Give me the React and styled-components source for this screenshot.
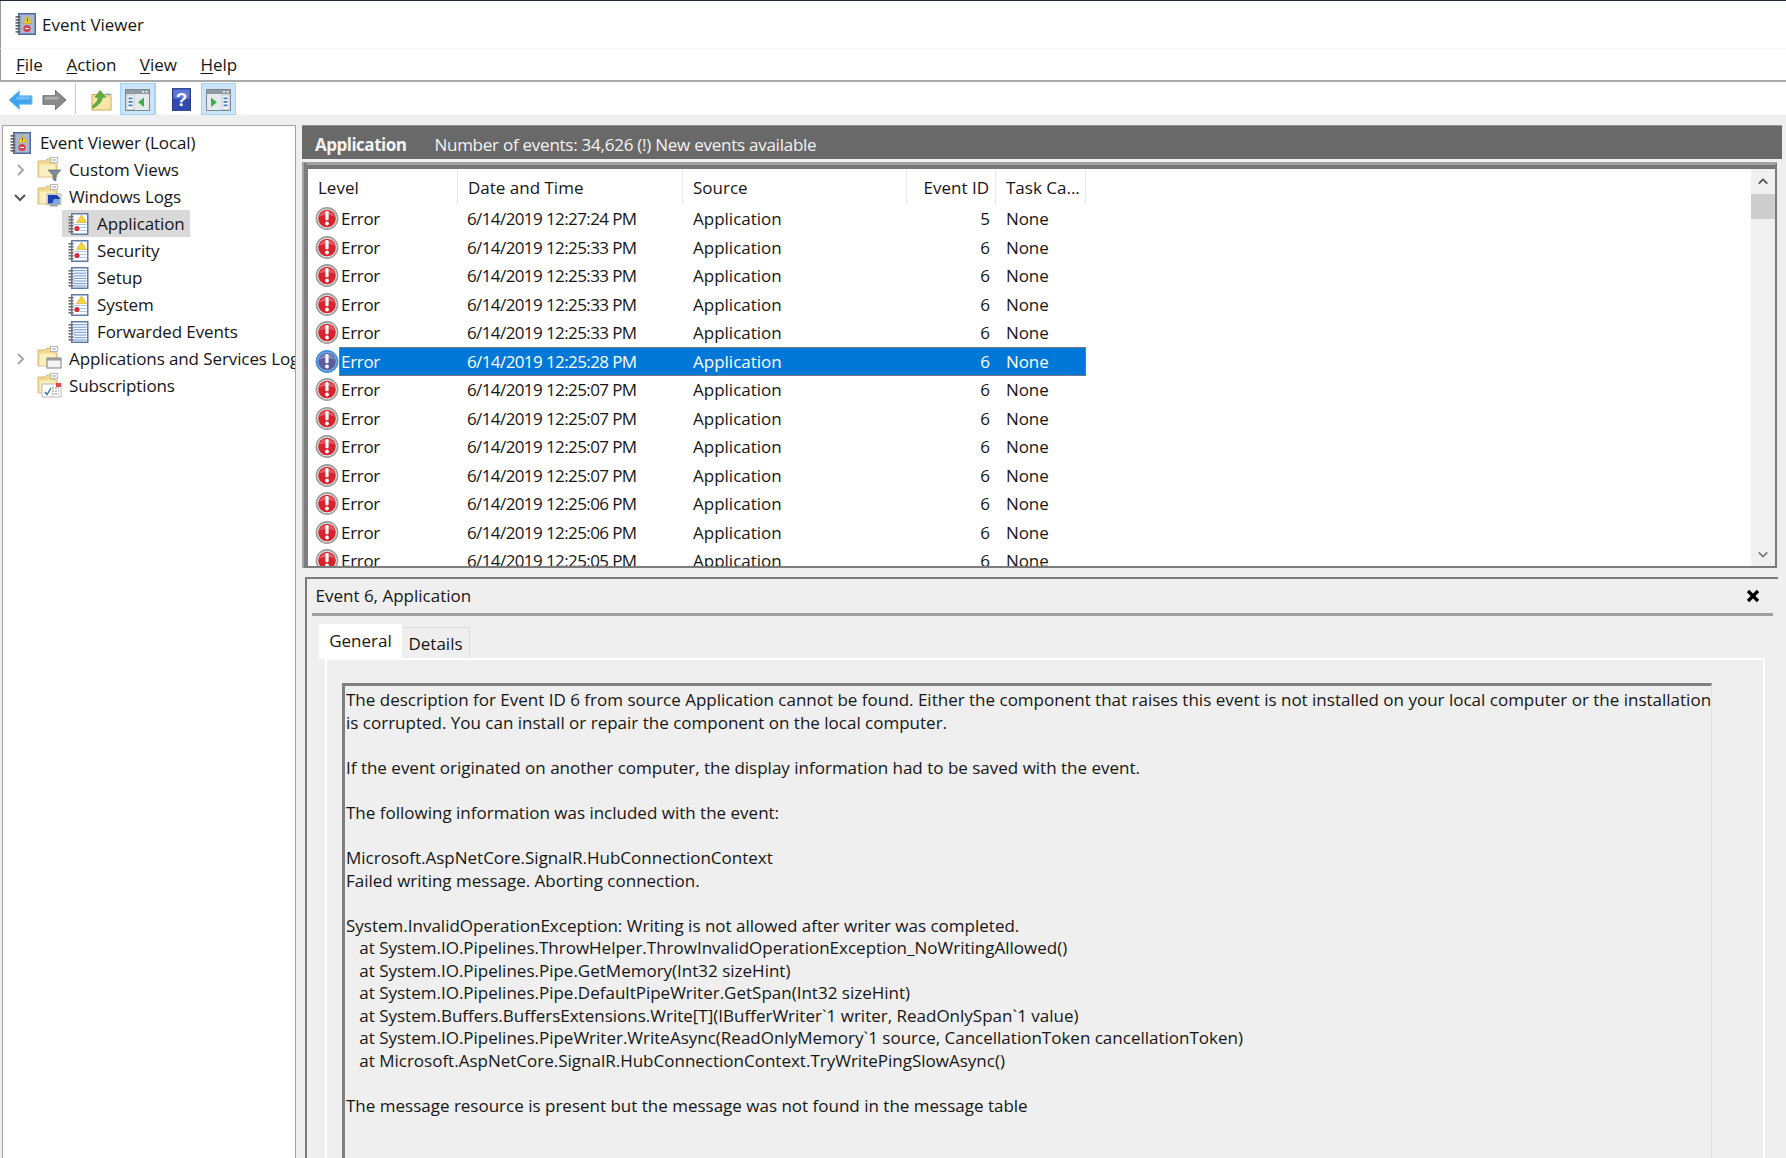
import React from "react";
import styled, { createGlobalStyle } from "styled-components";

const GlobalStyle = createGlobalStyle`
  html, body { margin: 0; padding: 0; background: #efefef; }
  body { font-family: "Open Sans", "Noto Sans", "Liberation Sans", sans-serif; color: #161616; overflow: hidden; }
  * { box-sizing: border-box; }
`;

const Window = styled.div`
  width: 1786px;
  height: 1158px;
  display: flex;
  flex-direction: column;
  overflow: hidden;
  font-size: 17px;
  background: #efefef;
  border-top: 1px solid #1f2d3a;
`;

const TitleBar = styled.div`
  height: 47px;
  flex: none;
  display: flex;
  align-items: center;
  gap: 4px;
  padding: 0 0 1px 13px;
  background: #fff;
  border-left: 1px solid #9a9a9a;
`;

const MenuBar = styled.div`
  height: 34px;
  flex: none;
  display: flex;
  align-items: center;
  padding-left: 15px;
  gap: 23.5px;
  background: #fff;
  border-top: 1px solid #f4f4f4;
  border-left: 1px solid #9a9a9a;
  border-bottom: 2px solid #a9a9a9;
  u { text-underline-offset: 2px; text-decoration-thickness: 1px; }
`;

const Toolbar = styled.div`
  height: 33px;
  flex: none;
  display: flex;
  align-items: center;
  padding-left: 7px;
  background: #fff;
`;

const ToolButton = styled.div`
  height: 32px;
  width: ${(p) => p.$w || 35}px;
  margin-left: ${(p) => p.$ml || 0}px;
  margin-top: 1px;
  padding-top: 1px;
  display: flex;
  align-items: center;
  justify-content: center;
  background: ${(p) => (p.$active ? "#cce4f7" : "transparent")};
  border: 1px solid ${(p) => (p.$active ? "#a6d2f6" : "transparent")};
`;

const ToolSep = styled.div`
  width: 1px;
  height: 31px;
  margin-left: ${(p) => p.$ml || 0}px;
  background: #c9c9c9;
`;

const Workspace = styled.div`
  flex: 1;
  min-height: 0;
  display: grid;
  grid-template-columns: 294px 1fr;
  gap: 6px;
  padding: 10px 4px 0 2px;
`;

const TreePane = styled.div`
  background: #fff;
  border: 1px solid #a3a3a3;
  border-width: 1px 1px 0 1px;
  padding-top: 3px;
  overflow: hidden;
  white-space: nowrap;
  letter-spacing: -0.1px;
`;

const TreeRow = styled.div`
  height: 27px;
  display: flex;
  align-items: center;
  padding-left: ${(p) => p.$pad}px;
`;

const Chevron = styled.span`
  width: 21px;
  flex: none;
  display: flex;
  justify-content: center;
`;

const TreeIcon = styled.span`
  width: ${(p) => p.$w || 31}px;
  padding-left: ${(p) => p.$pad || 0}px;
  flex: none;
  display: flex;
`;

const LeafItem = styled.div`
  height: 27px;
  display: flex;
  align-items: center;
  padding: 0 5px;
  background: ${(p) => (p.$current ? "#d9d9d9" : "transparent")};
`;

const RightColumn = styled.div`
  display: flex;
  flex-direction: column;
  min-width: 0;
`;

const HeaderBar = styled.div`
  height: 34px;
  flex: none;
  display: flex;
  align-items: center;
  gap: 28px;
  padding: 3px 0 0 13px;
  background: #696969;
  color: #f3f3f3;
  border-top: 1px solid #8f8f8f;
  b { font-weight: 700; letter-spacing: -0.5px; }
  span { letter-spacing: -0.25px; }
`;

const ListFrame = styled.div`
  height: 406px;
  flex: none;
  margin: 3px 5px 0 2px;
  padding-top: 4px;
  display: flex;
  background: #fff;
  border: 2px solid #7c7c7c;
  border-left-width: 4px;
  border-top: 3px solid #a2a2a2;
  box-shadow: inset 0 4px 0 #757575, -2px 0 0 #a2a2a2;
  overflow: hidden;
`;

const ListBody = styled.div`
  flex: 1;
  min-width: 0;
  overflow: hidden;
`;

const HeadRow = styled.div`
  height: 35.5px;
  display: flex;
`;

const HeadCell = styled.div`
  width: ${(p) => p.$w}px;
  flex: none;
  display: flex;
  align-items: center;
  padding: 2px 6px 0 10px;
  white-space: nowrap;
  justify-content: ${(p) => (p.$right ? "flex-end" : "flex-start")};
  border-right: 1px solid #e8e8e8;
`;

const EventRow = styled.div`
  height: 28.5px;
  display: flex;
  align-items: center;
  width: 778px;
`;

const LevelIcon = styled.span`
  width: 31px;
  flex: none;
  display: flex;
  padding-left: 7px;
`;

const RowCells = styled.div`
  flex: 1;
  height: 100%;
  display: flex;
  align-items: center;
  background: ${(p) => (p.$selected ? "#0078d7" : "transparent")};
  color: ${(p) => (p.$selected ? "#fff" : "inherit")};
  outline: ${(p) => (p.$selected ? "1px solid #6f7a84" : "none")};
  outline-offset: -1px;
`;

const Cell = styled.span`
  width: ${(p) => p.$w}px;
  flex: none;
  padding-left: ${(p) => p.$pad || 0}px;
  text-align: ${(p) => (p.$right ? "right" : "left")};
  letter-spacing: ${(p) => p.$ls || 0}px;
`;

const ScrollTrack = styled.div`
  width: 24px;
  flex: none;
  background: #f0f0f0;
  display: flex;
  flex-direction: column;
  align-items: center;
`;

const ScrollButton = styled.div`
  height: 25px;
  flex: none;
  width: 100%;
  display: flex;
  align-items: center;
  justify-content: center;
`;

const ScrollThumb = styled.div`
  height: 25px;
  width: 100%;
  flex: none;
  background: #cdcdcd;
`;

const ScrollGap = styled.div`
  flex: 1;
`;

const DetailsPane = styled.div`
  flex: 1;
  min-height: 0;
  margin: 9px 4px 0 3px;
  padding: 0 5px 0 5px;
  border-top: 2px solid #7c7c7c;
  border-left: 2px solid #7c7c7c;
  display: flex;
  flex-direction: column;
  overflow: hidden;
`;

const DetailsTitle = styled.div`
  height: 37px;
  flex: none;
  display: flex;
  align-items: center;
  justify-content: space-between;
  padding: 0 13px 1px 3.5px;
  border-bottom: 3px solid #a0a0a0;
`;

const TabStrip = styled.div`
  height: 35px;
  margin-top: 7px;
  flex: none;
  display: flex;
  align-items: flex-end;
  padding-left: 7px;
`;

const Tab = styled.div`
  height: ${(p) => (p.$active ? 35 : 31)}px;
  width: ${(p) => p.$w}px;
  margin-bottom: ${(p) => (p.$active ? -1 : 0)}px;
  display: flex;
  align-items: center;
  justify-content: center;
  padding-bottom: ${(p) => (p.$active ? 3 : 0)}px;
  background: ${(p) => (p.$active ? "#fff" : "transparent")};
  border: 1px solid ${(p) => (p.$active ? "#fff" : "#dcdcdc")};
  border-left-width: ${(p) => (p.$active ? 1 : 0)}px;
  border-bottom: 0;
  position: relative;
`;

const TabPanel = styled.div`
  flex: 1;
  min-height: 0;
  margin: 0 8px 0 13px;
  padding: 23px 51px 0 15px;
  border-top: 2px solid #fff;
  border-left: 2px solid #fff;
  border-right: 2px solid #fff;
`;

const DescriptionBox = styled.div`
  height: 100%;
  padding: 3px 0 0 1px;
  border-top: 3px solid #808080;
  border-left: 3px solid #808080;
  border-right: 1px solid #e2e2e2;
  white-space: pre;
  line-height: 22.56px;
`;

// the root node and the title bar use the filled book, the logs the open page
function BookIcon({ size = 24 }) {
  return (
    <svg width={size} height={size} viewBox="0 0 24 24">
      <rect x="4" y="1" width="18" height="22" fill="#4f6a9c" />
      <rect x="5.5" y="2.5" width="15" height="19" fill="#a9b8d3" />
      {[4, 7, 10, 13, 16, 19].map((y) => (
        <rect key={y} x="1.5" y={y} width="5" height="1.7" fill="#666" />
      ))}
      <path d="M13.5 3.5 L18 11.5 L9 11.5 Z" fill="#f3cf2e" stroke="#b9951a" strokeWidth="0.5" />
      <rect x="13" y="6.5" width="1" height="3" fill="#5a4a10" />
      <circle cx="13" cy="16.5" r="3.6" fill="#d6404f" />
      <rect x="11" y="16" width="4" height="1" fill="#fff" />
    </svg>
  );
}

function NotebookIcon({ warn = true }) {
  return (
    <svg width="24" height="24" viewBox="0 0 24 24">
      <rect x="4" y="1" width="17.5" height="22" fill="#5f79a8" />
      <rect x="5.5" y="2.5" width="14.5" height="19" fill="#fff" />
      {[4, 7, 10, 13, 16, 19].map((y) => (
        <rect key={y} x="1.5" y={y} width="5" height="1.6" fill="#707070" />
      ))}
      {warn ? (
        <>
          <path d="M14.5 3 L19.5 10.5 L9.5 10.5 Z" fill="#f5d63c" stroke="#c69c16" strokeWidth="0.5" />
          <rect x="7" y="12" width="12.5" height="1" fill="#a9c6e4" />
          <rect x="13" y="15" width="6.5" height="1" fill="#a9c6e4" />
          <rect x="13" y="18" width="6.5" height="1" fill="#a9c6e4" />
          <circle cx="10" cy="16.5" r="2.6" fill="#d9293a" />
        </>
      ) : (
        [4, 6.6, 9.2, 11.8, 14.4, 17, 19.4].map((y) => (
          <rect key={y} x="7" y={y} width="12.5" height="1.2" fill="#7ba6d6" />
        ))
      )}
    </svg>
  );
}

function FolderBase() {
  return (
    <>
      <path d="M1 4 H8 L10 2 H17 L17 7 H20 V20 H1 Z" fill="#f3d98c" stroke="#c9ae68" strokeWidth="0.8" />
      <rect x="2.5" y="7.5" width="16" height="12" fill="#fbeebf" />
      <rect x="13.5" y="0.5" width="7" height="5" fill="#fff" stroke="#a8a8a8" strokeWidth="0.8" />
      <rect x="15" y="2.5" width="4" height="1" fill="#8a9cb5" />
    </>
  );
}

function FolderFilterIcon() {
  return (
    <svg width="25" height="25" viewBox="0 0 25 25">
      <FolderBase />
      <path d="M11 13 H24 L19 18.5 V24 L16 22.5 V18.5 Z" fill="#7d8c99" stroke="#56636e" strokeWidth="0.6" />
    </svg>
  );
}

function FolderMonitorIcon() {
  return (
    <svg width="25" height="25" viewBox="0 0 25 25">
      <FolderBase />
      <rect x="10" y="10" width="14" height="10.5" fill="#e6e6e6" stroke="#8e8e8e" strokeWidth="0.6" />
      <path d="M11 11 H20 L23 14 V19.5 H11 Z" fill="#1c3fb0" />
      <path d="M17 15 H23 V19.5 H15 Z" fill="#7da8e8" />
      <rect x="13" y="21" width="8" height="1.5" fill="#a0a0a0" />
    </svg>
  );
}

function FolderWindowIcon() {
  return (
    <svg width="25" height="25" viewBox="0 0 25 25">
      <FolderBase />
      <rect x="10" y="12" width="14" height="10" fill="#f4f4f4" stroke="#7f7f7f" strokeWidth="1" />
      <rect x="10" y="12" width="14" height="2.5" fill="#9a9a9a" />
    </svg>
  );
}

function FolderCalendarIcon() {
  return (
    <svg width="25" height="25" viewBox="0 0 25 25">
      <FolderBase />
      <rect x="5" y="11" width="19" height="13" fill="#fff" stroke="#a9a9a9" strokeWidth="0.8" />
      <rect x="19" y="10" width="5" height="4" fill="#e2474e" />
      <path d="M8 19 L10 21.5 L14 15" fill="none" stroke="#2a6fc0" strokeWidth="1.4" />
      <path d="M15 15 H22 M15 18 H22 M15 21 H22" stroke="#8a8a8a" strokeWidth="1.2" strokeDasharray="2 1" />
    </svg>
  );
}

function ErrorIcon({ selected }) {
  const face = selected ? "#5b5da0" : "#d8232e";
  const ring = selected ? "#3f8fd9" : "#9c9c9c";
  return (
    <svg width="25" height="25" viewBox="0 0 24 24">
      <circle cx="12" cy="12" r="11.4" fill={ring} />
      <circle cx="12" cy="12" r="9.8" fill={selected ? "#7fb4e4" : "#e6e6e6"} />
      <circle cx="12" cy="12" r="8.8" fill={face} />
      <path d="M4 10 A8.8 8.8 0 0 1 20 10 Q12 7 4 10 Z" fill="#fff" opacity="0.25" />
      <rect x="10.4" y="4.6" width="3.2" height="9.2" rx="1.2" fill="#fff" />
      <circle cx="12" cy="17" r="1.9" fill="#fff" />
    </svg>
  );
}

function ArrowIcon({ back }) {
  return (
    <svg width="26" height="24" viewBox="0 0 26 24">
      <path
        d={back ? "M1 12 L12 2 V7.5 H25 V16.5 H12 V22 Z" : "M25 12 L14 2 V7.5 H1 V16.5 H14 V22 Z"}
        fill={back ? "#3da3ea" : "#8a8a8a"}
        stroke={back ? "#86c8f4" : "#707070"}
        strokeWidth="1"
      />
      <rect x={back ? 9 : 3} y="8.5" width="14" height="3" fill="#fff" opacity="0.3" />
    </svg>
  );
}

function PaneIcon({ side }) {
  const left = side === "left";
  return (
    <svg width="25" height="22" viewBox="0 0 25 22">
      <rect x="0.5" y="0.5" width="24" height="21" fill="#e6eaed" stroke="#7d8a94" />
      <rect x="1" y="1" width="23" height="4" fill="#8f9aa3" />
      <rect x="17" y="2" width="2" height="1.5" fill="#fff" />
      <rect x="20.5" y="2" width="2" height="1.5" fill="#fff" />
      <rect x={left ? 2 : 16} y="6" width="7" height="14.5" fill="#f4f8fb" stroke="#9aa5ad" strokeWidth="0.5" />
      {[8.5, 12, 15.5].map((y) => (
        <rect key={y} x={left ? 3.5 : 17.5} y={y} width="4" height="1.8" fill="#4d7fb5" />
      ))}
      <path d={left ? "M19 8.5 V18 L13 13.2 Z" : "M5 8.5 V18 L11 13.2 Z"} fill="#3fb04a" />
    </svg>
  );
}

function HelpIcon() {
  return (
    <svg width="21" height="25" viewBox="0 0 21 25">
      <rect x="0.5" y="0.5" width="20" height="24" fill="#2f4bb0" stroke="#1f2f7a" />
      <rect x="1.5" y="1.5" width="18" height="10" fill="#5a78d8" />
      <text x="10.5" y="20" textAnchor="middle" fontFamily="Liberation Sans, sans-serif" fontWeight="700" fontSize="21" fill="#fff">?</text>
    </svg>
  );
}

function FolderUpIcon() {
  return (
    <svg width="23" height="24" viewBox="0 0 23 24">
      <path d="M1 6 H22 V23 H1 Z" fill="#f3d78e" stroke="#c9a95c" />
      <rect x="2" y="9" width="19" height="13" fill="#f8e5ac" />
      <path d="M2 18 Q8 14 8 9 H4.5 L10 1.5 L16 9 H12.5 Q12 16 2 21 Z" fill="#5eae3c" stroke="#3d8a28" strokeWidth="0.6" />
      <rect x="16" y="5" width="5" height="1.5" fill="#5aa9e6" />
    </svg>
  );
}

function ChevronIcon({ dir, color = "#a6a6a6", size = 14 }) {
  const d = {
    right: "M5 2 L10 7 L5 12",
    down: "M2 5 L7 10 L12 5",
    up: "M2 9 L7 4 L12 9",
  }[dir];
  return (
    <svg width={size} height={size} viewBox="0 0 14 14">
      <path d={d} fill="none" stroke={color} strokeWidth="2" />
    </svg>
  );
}

function CloseIcon() {
  return (
    <svg width="14" height="14" viewBox="0 0 14 14">
      <path d="M2 2 L12 12 M12 2 L2 12" stroke="#000" strokeWidth="3.2" />
    </svg>
  );
}

const events = [
  ["6/14/2019 12:27:24 PM", 5],
  ["6/14/2019 12:25:33 PM", 6],
  ["6/14/2019 12:25:33 PM", 6],
  ["6/14/2019 12:25:33 PM", 6],
  ["6/14/2019 12:25:33 PM", 6],
  ["6/14/2019 12:25:28 PM", 6, true],
  ["6/14/2019 12:25:07 PM", 6],
  ["6/14/2019 12:25:07 PM", 6],
  ["6/14/2019 12:25:07 PM", 6],
  ["6/14/2019 12:25:07 PM", 6],
  ["6/14/2019 12:25:06 PM", 6],
  ["6/14/2019 12:25:06 PM", 6],
  ["6/14/2019 12:25:05 PM", 6],
];

const description = `The description for Event ID 6 from source Application cannot be found. Either the component that raises this event is not installed on your local computer or the installation
is corrupted. You can install or repair the component on the local computer.

If the event originated on another computer, the display information had to be saved with the event.

The following information was included with the event:

Microsoft.AspNetCore.SignalR.HubConnectionContext
Failed writing message. Aborting connection.

System.InvalidOperationException: Writing is not allowed after writer was completed.
   at System.IO.Pipelines.ThrowHelper.ThrowInvalidOperationException_NoWritingAllowed()
   at System.IO.Pipelines.Pipe.GetMemory(Int32 sizeHint)
   at System.IO.Pipelines.Pipe.DefaultPipeWriter.GetSpan(Int32 sizeHint)
   at System.Buffers.BuffersExtensions.Write[T](IBufferWriter\`1 writer, ReadOnlySpan\`1 value)
   at System.IO.Pipelines.PipeWriter.WriteAsync(ReadOnlyMemory\`1 source, CancellationToken cancellationToken)
   at Microsoft.AspNetCore.SignalR.HubConnectionContext.TryWritePingSlowAsync()

The message resource is present but the message was not found in the message table`;

function Tree() {
  const branch = (label, Icon, open) => (
    <TreeRow $pad={6} key={label}>
      <Chevron>{open !== undefined && <ChevronIcon dir={open ? "down" : "right"} color={open ? "#555" : "#a6a6a6"} />}</Chevron>
      <TreeIcon $w={39} $pad={7}><Icon /></TreeIcon>
      {label}
    </TreeRow>
  );
  const leaf = (label, warn, current) => (
    <TreeRow $pad={59} key={label}>
      <LeafItem $current={current}>
        <TreeIcon $w={30}><NotebookIcon warn={warn} /></TreeIcon>
        {label}
      </LeafItem>
    </TreeRow>
  );
  return (
    <TreePane>
      <TreeRow $pad={6}>
        <TreeIcon><BookIcon /></TreeIcon>
        Event Viewer (Local)
      </TreeRow>
      {branch("Custom Views", FolderFilterIcon, false)}
      {branch("Windows Logs", FolderMonitorIcon, true)}
      {leaf("Application", true, true)}
      {leaf("Security", true)}
      {leaf("Setup", false)}
      {leaf("System", true)}
      {leaf("Forwarded Events", false)}
      {branch("Applications and Services Logs", FolderWindowIcon, false)}
      {branch("Subscriptions", FolderCalendarIcon)}
    </TreePane>
  );
}

export default function App() {
  return (
    <>
      <GlobalStyle />
      <Window>
        <TitleBar>
          <BookIcon size={24} />
          Event Viewer
        </TitleBar>
        <MenuBar>
          <span><u>F</u>ile</span>
          <span><u>A</u>ction</span>
          <span><u>V</u>iew</span>
          <span><u>H</u>elp</span>
        </MenuBar>
        <Toolbar>
          <ToolButton $w={27}><ArrowIcon back /></ToolButton>
          <ToolButton $w={27} $ml={7}><ArrowIcon /></ToolButton>
          <ToolSep $ml={7} />
          <ToolButton $w={23} $ml={14}><FolderUpIcon /></ToolButton>
          <ToolButton $active $ml={7}><PaneIcon side="left" /></ToolButton>
          <ToolSep />
          <ToolButton $w={21} $ml={15}><HelpIcon /></ToolButton>
          <ToolButton $active $ml={9}><PaneIcon side="right" /></ToolButton>
        </Toolbar>
        <Workspace>
          <Tree />
          <RightColumn>
            <HeaderBar>
              <b>Application</b>
              <span>Number of events: 34,626 (!) New events available</span>
            </HeaderBar>
            <ListFrame>
              <ListBody>
                <HeadRow>
                  <HeadCell $w={150}>Level</HeadCell>
                  <HeadCell $w={225}>Date and Time</HeadCell>
                  <HeadCell $w={224}>Source</HeadCell>
                  <HeadCell $w={89} $right>Event ID</HeadCell>
                  <HeadCell $w={90}>Task Ca...</HeadCell>
                </HeadRow>
                {events.map(([time, id, selected], i) => (
                  <EventRow key={i}>
                    <LevelIcon><ErrorIcon selected={selected} /></LevelIcon>
                    <RowCells $selected={selected}>
                      <Cell $w={128} $pad={2} $ls={-0.3}>Error</Cell>
                      <Cell $w={226} $ls={-0.6}>{time}</Cell>
                      <Cell $w={217}>Application</Cell>
                      <Cell $w={80} $right>{id}</Cell>
                      <Cell $w={90} $pad={16} $ls={-0.1}>None</Cell>
                    </RowCells>
                  </EventRow>
                ))}
              </ListBody>
              <ScrollTrack>
                <ScrollButton><ChevronIcon dir="up" color="#505050" size={12} /></ScrollButton>
                <ScrollThumb />
                <ScrollGap />
                <ScrollButton><ChevronIcon dir="down" color="#7a7a7a" size={12} /></ScrollButton>
              </ScrollTrack>
            </ListFrame>
            <DetailsPane>
              <DetailsTitle>
                Event 6, Application
                <CloseIcon />
              </DetailsTitle>
              <TabStrip>
                <Tab $active $w={83}>General</Tab>
                <Tab $w={68}>Details</Tab>
              </TabStrip>
              <TabPanel>
                <DescriptionBox>{description}</DescriptionBox>
              </TabPanel>
            </DetailsPane>
          </RightColumn>
        </Workspace>
      </Window>
    </>
  );
}
